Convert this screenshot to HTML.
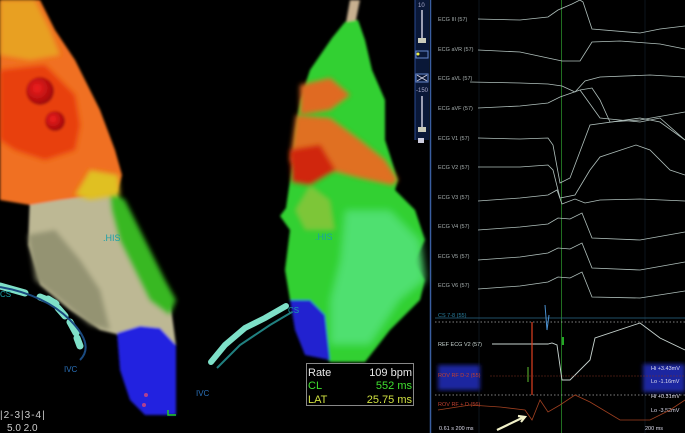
<!DOCTYPE html>
<html><head><meta charset="utf-8"><style>
html,body{margin:0;padding:0;background:#000;width:685px;height:433px;overflow:hidden}
svg{display:block}
text{font-family:"Liberation Sans",sans-serif}
</style></head><body>
<svg width="685" height="433" viewBox="0 0 685 433" xmlns="http://www.w3.org/2000/svg">
<defs>
<filter id="bl"><feGaussianBlur stdDeviation="4"/></filter>
<filter id="bl2"><feGaussianBlur stdDeviation="2"/></filter>
<filter id="bl1"><feGaussianBlur stdDeviation="1.2"/></filter>
<radialGradient id="ball" cx="0.4" cy="0.4" r="0.6"><stop offset="0" stop-color="#f02020"/><stop offset="1" stop-color="#a00808"/></radialGradient>
</defs>
<rect width="685" height="433" fill="#000"/>
<!-- LEFT MAP -->
<g filter="url(#bl1)">
<polygon points="30,195 115,190 140,250 170,300 176,345 150,340 120,335 100,330 70,310 40,285 28,245" fill="#bdb894"/>
<polygon points="110,190 125,200 145,240 165,280 176,300 170,315 150,300 135,270 120,240 112,210" fill="#38b820" filter="url(#bl2)"/>
<polygon points="28,235 55,230 80,260 100,290 110,330 90,325 60,300 35,280" fill="#8a8a6a" opacity="0.8" filter="url(#bl2)"/>
<polygon points="0,0 40,0 55,30 75,60 100,110 115,150 122,175 118,192 90,196 60,200 30,205 0,200" fill="#f07020"/>
<polygon points="0,0 35,0 50,30 60,55 30,60 0,55" fill="#e8a020" filter="url(#bl2)"/>
<polygon points="0,70 45,65 75,95 80,125 75,150 45,160 15,150 0,140" fill="#e84010" filter="url(#bl2)"/>
<polygon points="90,170 118,175 120,195 90,200 75,195" fill="#e0c020" filter="url(#bl2)"/>
<circle cx="40" cy="91" r="14" fill="url(#ball)"/>
<circle cx="55" cy="121" r="10" fill="url(#ball)"/>
<polygon points="117,333 140,326 160,328 176,345 176,415 145,415 130,400 120,370" fill="#2020e0"/>
</g>
<path d="M168,410 v5 h8" stroke="#2c2" fill="none" stroke-width="1.5"/>
<circle cx="146" cy="395" r="2" fill="#b04090"/><circle cx="144" cy="405" r="2" fill="#b04090"/>
<text x="103" y="241" font-size="9" fill="#19a0a8">.HIS</text>
<g stroke="#7ee0c8" stroke-width="7" fill="none" stroke-linecap="round">
<path d="M0,286 L25,293 M40,297 L55,303 M48,299 L56,304 M58,308 L65,316 M70,322 L76,333 M77,338 L80,346"/>
</g>
<path d="M0,287 Q45,295 70,320 T80,360" stroke="#1a4a80" stroke-width="2" fill="none"/>
<text x="0" y="297" font-size="8" fill="#19a0a8">CS</text>
<text x="64" y="372" font-size="8" fill="#2a70b8">IVC</text>
<text x="0" y="418" font-size="10" fill="#ccc" letter-spacing="1">|2-3|3-4|</text>
<text x="7" y="431" font-size="10" fill="#ccc">5.0   2.0</text>
<!-- MIDDLE MAP -->
<g filter="url(#bl1)">
<polygon points="350,0 360,0 356,20 345,28" fill="#c8b090"/>
<polygon points="345,22 358,20 365,40 372,70 385,100 385,140 398,180 395,190 415,210 425,240 415,262 425,280 420,300 390,330 365,362 330,362 300,330 290,300 285,270 290,230 280,216 286,208 290,180 295,130 300,100 310,70 332,38" fill="#30d030"/>
<polygon points="345,210 390,210 420,240 425,280 400,300 370,345 330,345 330,300 340,260" fill="#50e070" filter="url(#bl)"/>
<polygon points="300,85 330,78 350,95 330,110 300,115" fill="#e06a20" filter="url(#bl2)"/>
<polygon points="296,115 330,118 360,140 385,160 398,180 392,185 360,178 330,170 300,175 290,160" fill="#e07020" filter="url(#bl2)"/>
<polygon points="290,150 320,145 335,170 310,185 292,182" fill="#d02810" filter="url(#bl2)"/>
<polygon points="310,185 330,200 335,230 305,230 295,210" fill="#b0c040" filter="url(#bl2)" opacity="0.6"/>
<polygon points="290,300 310,300 325,315 330,360 305,355 295,330" fill="#2020d0"/>
</g>
<text x="315" y="240" font-size="9" fill="#19a0a8">.HIS</text>
<text x="288" y="313" font-size="8" fill="#19a0a8">CS</text>
<text x="196" y="396" font-size="8" fill="#2a70b8">IVC</text>
<g stroke="#7ee0c8" stroke-width="6" fill="none" stroke-linecap="round">
<path d="M211,362 L225,345 L245,328 L265,318 L286,306"/>
</g>
<path d="M217,368 L240,345 L270,325 L292,312" stroke="#208080" stroke-width="2" fill="none"/>
<rect x="306.5" y="363.5" width="107" height="42" fill="#000" stroke="#888" stroke-width="1"/>
<text x="308" y="376" font-size="11" fill="#e8e8e8">Rate</text><text x="412" y="376" font-size="11" fill="#e8e8e8" text-anchor="end">109 bpm</text>
<text x="308" y="389" font-size="11" fill="#40e030">CL</text><text x="412" y="389" font-size="11" fill="#40e030" text-anchor="end">552 ms</text>
<text x="308" y="403" font-size="11" fill="#d0e040">LAT</text><text x="412" y="403" font-size="11" fill="#d0e040" text-anchor="end">25.75 ms</text>
<!-- SLIDERS -->
<g>
<rect x="415" y="0" width="14" height="140" fill="#0a1838"/>
<line x1="430.5" y1="0" x2="430.5" y2="433" stroke="#3a5ea0" stroke-width="1.5"/>
<line x1="415" y1="0" x2="415" y2="140" stroke="#2a4a90"/>
<text x="418" y="7" font-size="6" fill="#aac">10</text>
<line x1="422" y1="10" x2="422" y2="40" stroke="#ccd" stroke-width="1.5"/>
<rect x="418" y="38" width="8" height="5" fill="#ccb"/>
<rect x="416" y="51" width="12" height="7" fill="none" stroke="#6688cc"/><circle cx="418" cy="54" r="1.5" fill="#ee4"/>
<rect x="416" y="74" width="12" height="8" fill="none" stroke="#6688cc"/><path d="M417,75 L427,81 M427,75 L417,81" stroke="#ccd"/>
<text x="416" y="92" font-size="6" fill="#aac">-150</text>
<line x1="422" y1="96" x2="422" y2="128" stroke="#ccd" stroke-width="1.5"/>
<rect x="418" y="127" width="8" height="5" fill="#ccb"/>
<rect x="418" y="138" width="6" height="5" fill="#ccd"/>
</g>
<!-- ECG -->
<g font-size="5.5" fill="#a8b0b0">
<text x="438" y="21">ECG III (57)</text>
<text x="438" y="51">ECG aVR (57)</text>
<text x="438" y="80">ECG aVL (57)</text>
<text x="438" y="110">ECG aVF (57)</text>
<text x="438" y="140">ECG V1 (57)</text>
<text x="438" y="169">ECG V2 (57)</text>
<text x="438" y="199">ECG V3 (57)</text>
<text x="438" y="228">ECG V4 (57)</text>
<text x="438" y="258">ECG V5 (57)</text>
<text x="438" y="287">ECG V6 (57)</text>
</g>
<line x1="561.5" y1="0" x2="561.5" y2="433" stroke="#2a8a2a" stroke-width="0.8"/>
<line x1="479" y1="0" x2="479" y2="433" stroke="#152030" stroke-width="0.6"/>
<line x1="645" y1="0" x2="645" y2="433" stroke="#152030" stroke-width="0.6"/>
<g stroke="#b0c0bc" stroke-width="0.8" fill="none">
<polyline points="478,19 520,20 548,17 558,10 572,4 580,0 583,2 592,29 640,33 660,29 685,26"/>
<polyline points="478,50 520,52 548,58 562,61 580,61 592,42 620,41 660,44 685,49"/>
<polyline points="470,82 520,83 548,84 562,86 575,92 585,81 600,77 650,75 685,77"/>
<polyline points="478,108 520,106 548,103 560,97 580,90 592,88 600,100 610,122 640,120 685,112"/>
<polyline points="580,90 600,118 640,122 660,118 685,140"/>
<polyline points="478,138 520,139 548,138 553,145 560,183 570,178 590,125 640,118 660,122 685,140"/>
<polyline points="478,167 520,167 548,165 553,170 560,198 575,195 590,170 600,157 636,145 650,150 670,170 685,175"/>
<polyline points="478,201 520,198 548,195 557,190 562,204 575,199 585,203 600,200 640,199 685,201"/>
<polyline points="478,230 520,227 548,224 558,218 570,219 582,213 592,238 640,240 685,232"/>
<polyline points="478,260 520,257 548,253 558,248 570,249 582,243 592,268 640,270 685,262"/>
<polyline points="478,289 520,286 548,282 558,277 570,278 582,272 592,297 640,298 685,291"/>
</g>
<line x1="435" y1="322" x2="685" y2="322" stroke="#aaa" stroke-dasharray="1.5,2" stroke-width="0.8"/>
<line x1="435" y1="395" x2="685" y2="395" stroke="#aaa" stroke-dasharray="1.5,2" stroke-width="0.8"/>
<line x1="435" y1="318" x2="685" y2="318" stroke="#2a6a8a" stroke-width="0.8"/>
<path d="M545,305 L547,330 L549,315" stroke="#4a90d0" fill="none"/>
<rect x="438" y="365" width="42" height="25" fill="#1a28a0" filter="url(#bl2)"/>
<rect x="643" y="364" width="42" height="28" fill="#1a28a0" filter="url(#bl2)"/>
<g font-size="5.5">
<text x="438" y="317" fill="#2a80a0">CS 7-8 (55)</text>
<text x="438" y="346" fill="#c8d4d0">REF ECG V2 (57)</text>
<text x="438" y="377" fill="#c04030">ROV RF D-2 (55)</text>
<text x="438" y="406" fill="#c04030">ROV RF + D (56)</text>
<text x="651" y="370" fill="#dde">Hi +3.43mV</text>
<text x="651" y="383" fill="#dde">Lo -1.16mV</text>
<text x="651" y="398" fill="#dde">Hi +0.31mV</text>
<text x="651" y="412" fill="#dde">Lo -3.52mV</text>
<text x="439" y="430" fill="#dde">0.61 s 200 ms</text>
<text x="645" y="430" fill="#dde">200 ms</text>
</g>
<polyline points="492,344 548,344 552,343 557,345 562,380 570,380 590,360 595,338 640,323 660,338 685,350" stroke="#c8d4d0" stroke-width="0.9" fill="none"/>
<line x1="532" y1="322" x2="532" y2="395" stroke="#e04020" stroke-width="1.2"/>
<line x1="528" y1="367" x2="528" y2="382" stroke="#60c030" stroke-width="1"/>
<line x1="563" y1="337" x2="563" y2="345" stroke="#30e030" stroke-width="1.5"/>
<line x1="490" y1="376" x2="685" y2="376" stroke="#803020" stroke-width="0.6" stroke-dasharray="2,1"/>
<polyline points="438,410 470,405 500,407 525,410 532,420 540,400 548,412 560,405 575,395 590,402 620,420 650,420 670,410 685,400" stroke="#a04020" stroke-width="0.8" fill="none"/>
<path d="M497,430 L524,417 M518,416 L525,417 L521,422" stroke="#f0f0c8" stroke-width="2.2" fill="none"/>
</svg>
</body></html>
